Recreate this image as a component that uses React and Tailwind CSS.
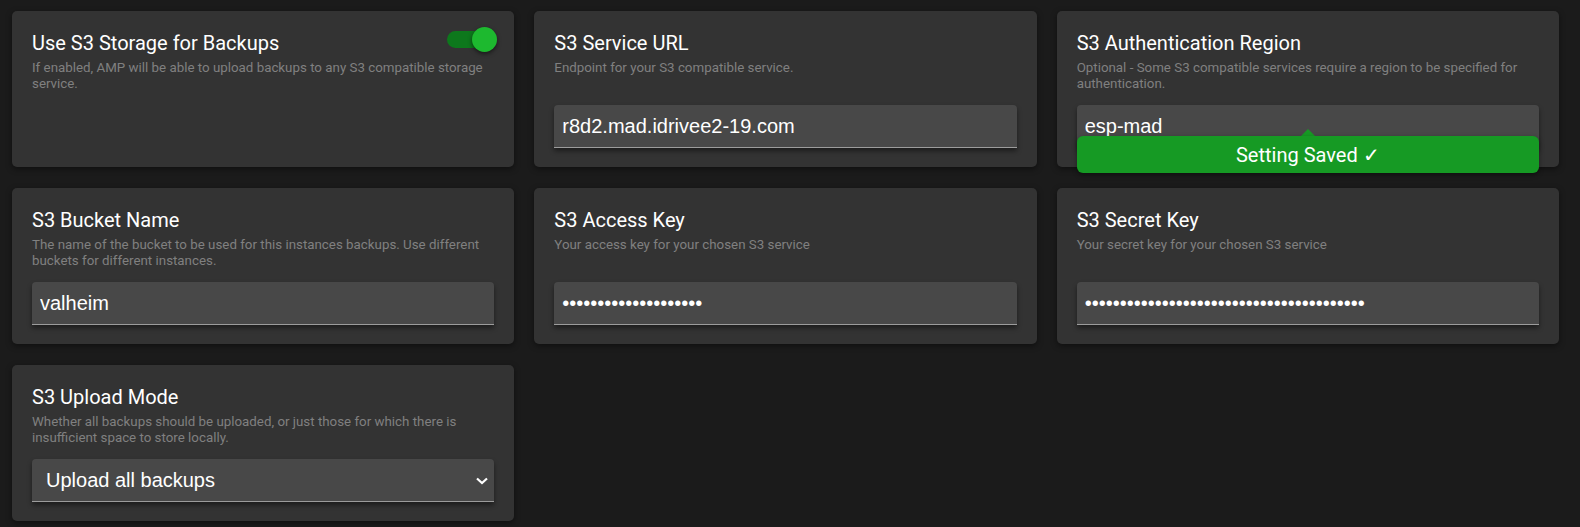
import React from 'react';

const settings = [
  {
    title: 'Use S3 Storage for Backups',
    desc: 'If enabled, AMP will be able to upload backups to any S3 compatible storage service.',
    kind: 'toggle',
  },
  {
    title: 'S3 Service URL',
    desc: 'Endpoint for your S3 compatible service.',
    kind: 'text',
    value: 'r8d2.mad.idrivee2-19.com',
  },
  {
    title: 'S3 Authentication Region',
    desc: 'Optional - Some S3 compatible services require a region to be specified for authentication.',
    kind: 'text',
    value: 'esp-mad',
    saved: true,
  },
  {
    title: 'S3 Bucket Name',
    desc: 'The name of the bucket to be used for this instances backups. Use different buckets for different instances.',
    kind: 'text',
    value: 'valheim',
  },
  {
    title: 'S3 Access Key',
    desc: 'Your access key for your chosen S3 service',
    kind: 'password',
    value: 'AKIAIOSFODNN7EXAMPLE',
  },
  {
    title: 'S3 Secret Key',
    desc: 'Your secret key for your chosen S3 service',
    kind: 'password',
    value: 'wJalrXUtnFEMIK7MDENGbPxRfiCYEXAMPLEKEY12',
  },
  {
    title: 'S3 Upload Mode',
    desc: 'Whether all backups should be uploaded, or just those for which there is insufficient space to store locally.',
    kind: 'select',
    value: 'Upload all backups',
  },
];

function Toggle() {
  return (
    <div className="relative w-[50px] h-[25px] -mt-[4px] -mr-[3px] shrink-0">
      <div className="absolute left-0 top-[4px] h-[17px] w-[46px] rounded-full bg-[#0d781c]" />
      <div className="absolute right-0 top-0 h-[25px] w-[25px] rounded-full bg-[#1db92f] shadow-[0_2px_4px_rgba(0,0,0,0.5)]" />
    </div>
  );
}

const fieldClass =
  "w-full h-[43px] rounded-t-[4px] bg-[#484848] border-b border-[#9c9c9c] text-white text-[20px] font-['Liberation_Sans',Arial,sans-serif] outline-none shadow-[0_3px_5px_rgba(0,0,0,0.45)]";

function Field({ item }) {
  if (item.kind === 'select') {
    return (
      <div className="relative">
        <select
          defaultValue={item.value}
          className={`${fieldClass} appearance-none pl-[14px] pr-8`}
        >
          <option>Upload all backups</option>
          <option>Upload only when insufficient space</option>
        </select>
        <svg
          className="absolute right-[6px] top-[18px] pointer-events-none"
          width="12"
          height="8"
          viewBox="0 0 12 8"
        >
          <polyline points="1,1.5 6,6 11,1.5" fill="none" stroke="white" strokeWidth="2.2" />
        </svg>
      </div>
    );
  }

  return (
    <div className="relative">
      <input
        type={item.kind === 'password' ? 'password' : 'text'}
        defaultValue={item.value}
        readOnly
        className={`${fieldClass} px-2`}
      />
      {item.saved && (
        <div className="absolute left-0 right-0 top-[31px] z-10">
          {/* little arrow pointing at the field */}
          <div className="mx-auto w-0 h-0 border-x-[7px] border-x-transparent border-b-[7px] border-b-[#169a24] -mt-[7px]" />
          <div className="h-[37px] rounded-[6px] bg-[#169a24] flex items-center justify-center text-white text-[20px] shadow-[0_2px_5px_rgba(0,0,0,0.4)]">
            Setting Saved ✓
          </div>
        </div>
      )}
    </div>
  );
}

function SettingCard({ item }) {
  return (
    <div className="h-[156px] rounded-[5px] bg-[#333333] shadow-[0_2px_6px_rgba(0,0,0,0.45)] px-5 pt-5 pb-[19px] flex flex-col">
      <div className="flex justify-between items-start">
        <h3 className="text-[20px] leading-6 text-white font-normal">{item.title}</h3>
        {item.kind === 'toggle' && <Toggle />}
      </div>
      <p className="mt-[5px] text-[13.33px] leading-4 text-[#808080]">{item.desc}</p>
      {item.kind !== 'toggle' && (
        <div className="mt-auto">
          <Field item={item} />
        </div>
      )}
    </div>
  );
}

export default function App() {
  return (
    <div className="min-h-screen bg-[#1b1b1b] font-['Roboto',sans-serif] pl-3 pr-[21px] pt-[11px]">
      <div className="grid grid-cols-3 gap-x-5 gap-y-[21px]">
        {settings.map((item) => (
          <SettingCard key={item.title} item={item} />
        ))}
      </div>
    </div>
  );
}
